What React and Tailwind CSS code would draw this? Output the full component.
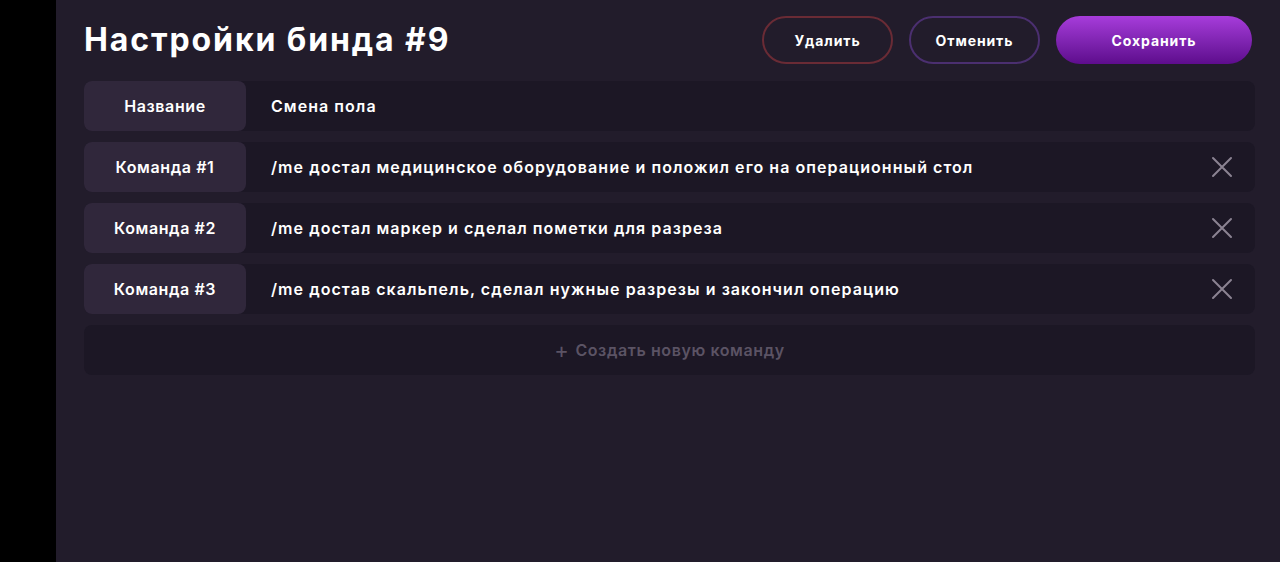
import React from "react";

const font = { fontFamily: "Inter, 'Noto Sans', sans-serif" };

function XIcon() {
  return (
    <svg width="22" height="22" viewBox="0 0 22 22" fill="none" stroke="#8b8392" strokeWidth="2" strokeLinecap="round">
      <path d="M2 2 L20 20 M20 2 L2 20" />
    </svg>
  );
}

function Row({ label, text, removable }) {
  return (
    <div className="flex h-[50px] items-center rounded-lg bg-[#1c1725]">
      <div className="flex h-full w-[162px] shrink-0 items-center justify-center rounded-lg bg-[#30273b] text-[16px] font-semibold tracking-[0.6px] text-white">
        {label}
      </div>
      <div className="ml-[25px] flex-1 text-[16px] font-semibold tracking-[1.05px] text-white">{text}</div>
      {removable && (
        <div className="mr-[22px] flex items-center">
          <XIcon />
        </div>
      )}
    </div>
  );
}

export default function App() {
  return (
    <div className="flex h-[562px] w-[1280px] bg-black" style={font}>
      <div className="w-[56px] shrink-0 bg-black" />
      <div className="flex-1 bg-[#221c2b] pl-[28px] pr-[25px]">
        <div className="flex h-[81px] items-center pb-[1px]">
          <h1 className="text-[32px] font-bold tracking-[1.9px] text-white">Настройки бинда #9</h1>
          <div className="ml-auto flex items-center gap-[16px] pr-[3px]">
            <button className="h-[48px] w-[131px] rounded-full border-2 border-[#6a2b35] text-[14px] font-bold tracking-[0.9px] text-white">
              Удалить
            </button>
            <button className="h-[48px] w-[131px] rounded-full border-2 border-[#4b2f70] text-[14px] font-bold tracking-[0.9px] text-white">
              Отменить
            </button>
            <button className="h-[48px] w-[196px] rounded-full bg-gradient-to-b from-[#a73cdb] to-[#5e0c8d] text-[14px] font-bold tracking-[0.9px] text-white">
              Сохранить
            </button>
          </div>
        </div>
        <div className="flex flex-col gap-[11px]">
          <Row label="Название" text="Смена пола" />
          <Row label="Команда #1" text="/me достал медицинское оборудование и положил его на операционный стол" removable />
          <Row label="Команда #2" text="/me достал маркер и сделал пометки для разреза" removable />
          <Row label="Команда #3" text="/me достав скальпель, сделал нужные разрезы и закончил операцию" removable />
          <div className="flex h-[50px] items-center justify-center rounded-lg bg-[#1c1725] text-[16px] font-semibold tracking-[0.6px] text-[#5b5364]">
            <span className="mr-[6px] text-[22px] font-normal leading-none">+</span>
            Создать новую команду
          </div>
        </div>
      </div>
    </div>
  );
}
